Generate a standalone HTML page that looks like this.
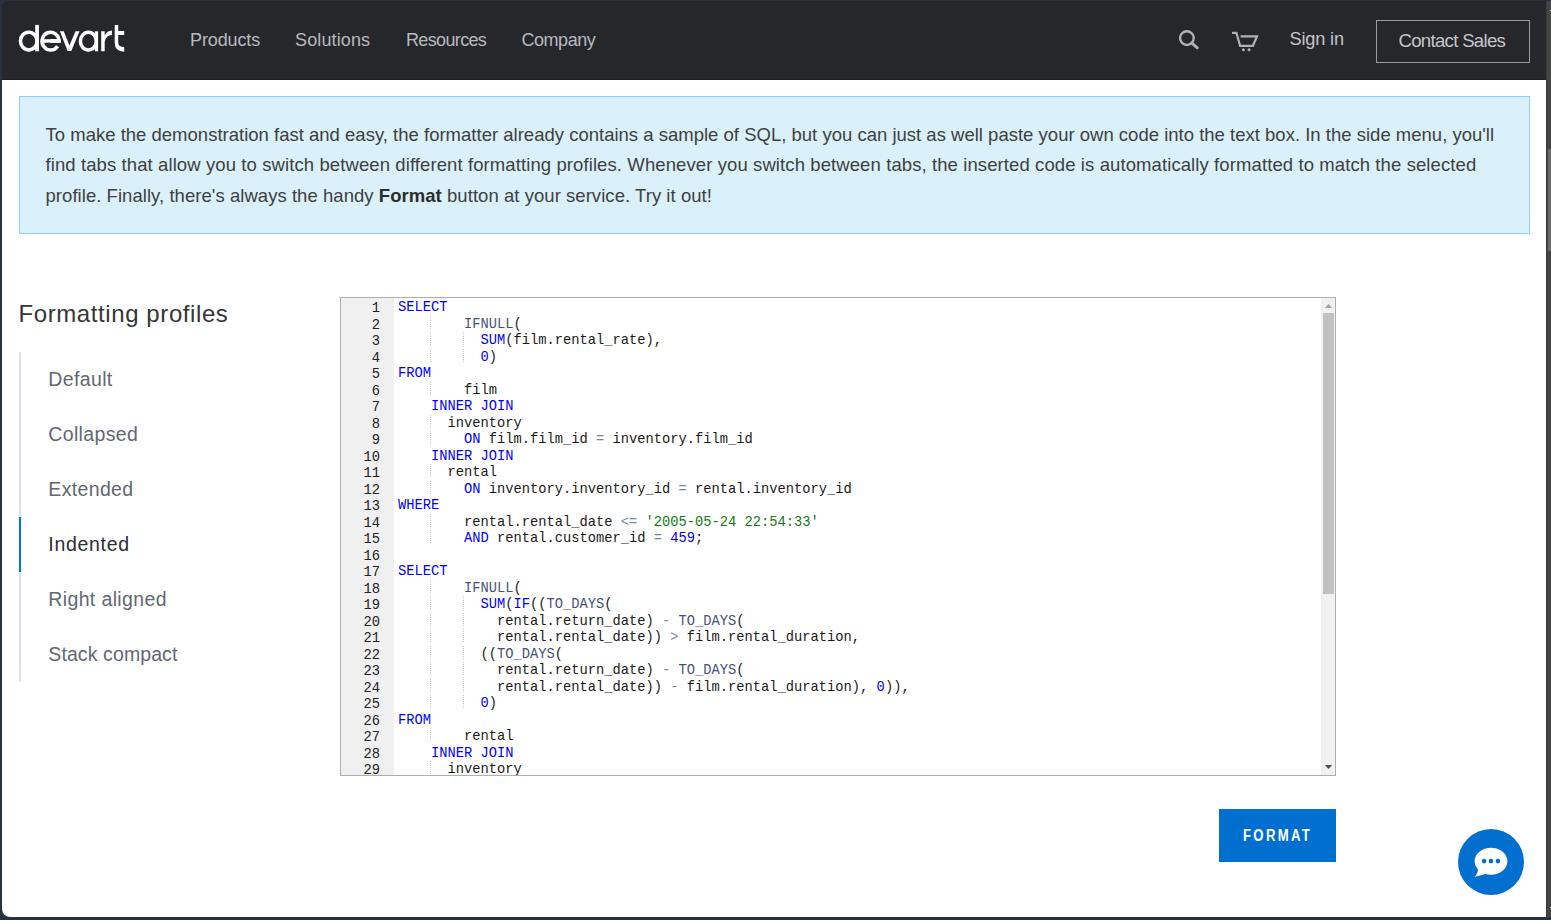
<!DOCTYPE html>
<html><head><meta charset="utf-8">
<style>
html,body{margin:0;padding:0;}
body{width:1551px;height:920px;overflow:hidden;background:#27313f;position:relative;font-family:"Liberation Sans",sans-serif;}
.win{position:absolute;left:0;top:0;width:1546px;height:917px;background:linear-gradient(#26272b 0,#26272b 80px,#fff 80px);clip-path:inset(1px 0 0 2px round 6px 0 0 8px);}
.a{position:absolute;white-space:pre;}
.nav{position:absolute;left:0;top:0;width:1546px;height:80px;background:#26272b;}
.navline{position:absolute;left:0;top:79px;width:1546px;height:1px;background:#1f2023;}
.ni{position:absolute;font-size:17.4px;line-height:20px;color:#b7babf;white-space:pre;}
.logo{position:absolute;left:0;top:0;}
.cs{position:absolute;left:1376px;top:20px;width:152px;height:41px;border:1px solid #9c9c9c;}
.sb{position:absolute;left:1546px;top:1px;width:5px;height:916px;background:#444;}
.sbl{position:absolute;left:1546px;top:1px;width:1px;height:916px;background:#383838;}
.sbt{position:absolute;left:1548px;top:149px;width:3px;height:102px;background:#6a6a6a;}
.info{position:absolute;left:19px;top:96px;width:1509px;height:136px;background:#daf1fb;border:1px solid #8ccefb;}
.it{position:absolute;left:46px;font-size:18.3px;line-height:20px;color:#3a3a3a;white-space:pre;}
.h2{position:absolute;left:19px;top:300px;font-size:25px;line-height:30px;color:#333;white-space:pre;}
.menuline{position:absolute;left:19px;top:352px;width:2px;height:330px;background:#dce0ea;}
.menuact{position:absolute;left:19px;top:517px;width:2px;height:55px;background:#0071e6;}
.mi{position:absolute;left:47px;font-size:19.8px;line-height:24px;color:#5d6470;white-space:pre;}
.ed{position:absolute;left:340px;top:297px;width:994px;height:477px;border:1px solid #abaeb3;background:#fff;overflow:hidden;}
.gut{position:absolute;left:341px;top:298px;width:53px;height:477px;background:#f0f0f0;}
.ln{position:absolute;left:341px;width:39px;text-align:right;font-family:"Liberation Mono",monospace;font-size:13.75px;line-height:16.5px;color:#222;}
.cl{position:absolute;left:398px;font-family:"Liberation Mono",monospace;font-size:13.75px;line-height:16.5px;color:#1a1a1a;white-space:pre;}
.k{color:#0000ff} .f{color:#46527a} .n{color:#0000ee} .s{color:#137a13} .o{color:#7a8594}
.g{position:absolute;width:1px;height:14px;background-image:linear-gradient(#c8c8c8 50%, transparent 50%);background-size:1px 2px;}
.vtrack{position:absolute;left:1321px;top:298px;width:14px;height:477px;background:#f1f1f1;}
.vthumb{position:absolute;left:1323px;top:313px;width:11px;height:281px;background:#c1c1c1;}
.fbtn{position:absolute;left:1219px;top:809px;width:117px;height:53px;background:#006fd0;}
.ft{position:absolute;left:1243px;top:820px;font-size:16px;line-height:24px;font-weight:bold;color:#fff;letter-spacing:2.3px;white-space:pre;}
.chat{position:absolute;left:1458px;top:828.5px;width:66px;height:66px;border-radius:50%;background:#006fd0;}
</style></head><body>
<div class="win">
<div class="nav"></div><div class="navline"></div>
<svg class="logo" width="140" height="80" viewBox="0 0 140 80">
<g fill="none" stroke="#fff" stroke-width="3.5">
<ellipse cx="28.75" cy="41.05" rx="8.3" ry="8.85"/>
<path d="M50.55 40.95 H59.1 A8.55 8.9 0 1 0 57.6 46.2" />
<ellipse cx="88.35" cy="41.15" rx="7.95" ry="8.8"/>
</g>
<g fill="#fff">
<rect x="35.2" y="24.9" width="3.7" height="26.4"/>
<rect x="42" y="39.2" width="18.6" height="3.5"/>
<polygon points="59.9,31.2 67.6,50.9 71.3,50.9 79.5,31.2 75.5,31.2 69.45,45.6 63.8,31.2"/>
<rect x="94.9" y="31.3" width="3.2" height="20"/>
<path d="M101.2 51.3 V31.35 H104.7 V35.5 Q107 30.8 111.9 30.6 V34.9 Q106 35.2 104.7 41.5 V51.3 Z"/>
<path d="M114.7 24.9 H118.2 V31 H124.2 V34.9 H118.2 V42.5 Q118.4 47.1 124.2 47.1 V51.7 Q114.7 51.7 114.7 42.5 Z"/>
</g></svg>
<div class="a" style="left:190.00px;top:28.76px;font-size:18.00px;line-height:23px;color:#b7babf;letter-spacing:-0.114px;">Products</div><div class="a" style="left:295.00px;top:28.76px;font-size:18.00px;line-height:23px;color:#b7babf;letter-spacing:0.125px;">Solutions</div><div class="a" style="left:406.00px;top:28.76px;font-size:18.00px;line-height:23px;color:#b7babf;letter-spacing:-0.650px;">Resources</div><div class="a" style="left:521.50px;top:28.76px;font-size:18.00px;line-height:23px;color:#b7babf;letter-spacing:-0.467px;">Company</div><div class="a" style="left:1289.50px;top:26.69px;font-size:18.20px;line-height:24px;color:#c3c5c9;letter-spacing:-0.180px;">Sign in</div><div class="a" style="left:1398.50px;top:28.55px;font-size:18.60px;line-height:24px;color:#c3c5c9;letter-spacing:-0.700px;">Contact Sales</div>
<svg class="a" style="left:0;top:0" width="1546" height="80">
<g fill="none" stroke="#b1b1b1">
<circle cx="1186.9" cy="38.1" r="6.85" stroke-width="2.4"/>
<line x1="1191.6" y1="42.9" x2="1197.3" y2="47.9" stroke-width="2.8" stroke-linecap="round"/>
<polyline points="1232,32.8 1236.4,32.8 1240.1,45.9 1252.9,45.9 1257,36.3 1240.6,36.3" stroke-width="2.2" stroke-linejoin="miter"/>
</g>
<g fill="#b1b1b1"><circle cx="1243.4" cy="49.8" r="1.5"/><circle cx="1249" cy="49.8" r="1.5"/></g>
</svg>
<div class="cs"></div>

<div class="info"></div>
<div class="a" style="left:45.50px;top:123.39px;font-size:18.50px;line-height:24px;color:#404040;letter-spacing:0.009px;">To make the demonstration fast and easy, the formatter already contains a sample of SQL, but you can just as well paste your own code into the text box. In the side menu, you'll</div><div class="a" style="left:45.50px;top:152.79px;font-size:18.50px;line-height:24px;color:#404040;letter-spacing:0.099px;">find tabs that allow you to switch between different formatting profiles. Whenever you switch between tabs, the inserted code is automatically formatted to match the selected</div><div class="a" style="left:45.50px;top:183.79px;font-size:18.50px;line-height:24px;color:#404040;letter-spacing:0.049px;">profile. Finally, there's always the handy <b style="color:#2e2e2e">Format</b> button at your service. Try it out!</div>

<div class="a" style="left:18.50px;top:298.28px;font-size:24.00px;line-height:31px;color:#363636;letter-spacing:0.590px;">Formatting profiles</div><div class="a" style="left:48.30px;top:367.24px;font-size:19.50px;line-height:25px;color:#616874;letter-spacing:0.367px;">Default</div><div class="a" style="left:48.30px;top:422.24px;font-size:19.50px;line-height:25px;color:#616874;letter-spacing:0.350px;">Collapsed</div><div class="a" style="left:48.30px;top:477.24px;font-size:19.50px;line-height:25px;color:#616874;letter-spacing:0.350px;">Extended</div><div class="a" style="left:48.30px;top:532.24px;font-size:19.50px;line-height:25px;color:#2b2f36;letter-spacing:0.686px;">Indented</div><div class="a" style="left:48.30px;top:587.24px;font-size:19.50px;line-height:25px;color:#616874;letter-spacing:0.367px;">Right aligned</div><div class="a" style="left:48.30px;top:642.24px;font-size:19.50px;line-height:25px;color:#616874;letter-spacing:0.100px;">Stack compact</div>
<div class="menuline"></div><div class="menuact"></div>

<div class="ed"></div>
<div class="gut"></div>
<div style="position:absolute;left:341px;top:298px;width:994px;height:477px;overflow:hidden;">
<div style="position:absolute;left:-341px;top:-298px;width:1551px;height:920px;">
<div class="ln" style="top:301.20px">1</div><div class="cl" style="top:300.20px"><span class="k">SELECT</span></div><div class="ln" style="top:317.70px">2</div><div class="cl" style="top:316.70px">        <span class="f">IFNULL</span>(</div><div class="ln" style="top:334.20px">3</div><div class="cl" style="top:333.20px">          <span class="k">SUM</span>(film.rental_rate),</div><div class="ln" style="top:350.70px">4</div><div class="cl" style="top:349.70px">          <span class="n">0</span>)</div><div class="ln" style="top:367.20px">5</div><div class="cl" style="top:366.20px"><span class="k">FROM</span></div><div class="ln" style="top:383.70px">6</div><div class="cl" style="top:382.70px">        film</div><div class="ln" style="top:400.20px">7</div><div class="cl" style="top:399.20px">    <span class="k">INNER</span> <span class="k">JOIN</span></div><div class="ln" style="top:416.70px">8</div><div class="cl" style="top:415.70px">      inventory</div><div class="ln" style="top:433.20px">9</div><div class="cl" style="top:432.20px">        <span class="k">ON</span> film.film_id <span class="o">=</span> inventory.film_id</div><div class="ln" style="top:449.70px">10</div><div class="cl" style="top:448.70px">    <span class="k">INNER</span> <span class="k">JOIN</span></div><div class="ln" style="top:466.20px">11</div><div class="cl" style="top:465.20px">      rental</div><div class="ln" style="top:482.70px">12</div><div class="cl" style="top:481.70px">        <span class="k">ON</span> inventory.inventory_id <span class="o">=</span> rental.inventory_id</div><div class="ln" style="top:499.20px">13</div><div class="cl" style="top:498.20px"><span class="k">WHERE</span></div><div class="ln" style="top:515.70px">14</div><div class="cl" style="top:514.70px">        rental.rental_date <span class="o">&lt;=</span> <span class="s">'2005-05-24 22:54:33'</span></div><div class="ln" style="top:532.20px">15</div><div class="cl" style="top:531.20px">        <span class="k">AND</span> rental.customer_id <span class="o">=</span> <span class="n">459</span>;</div><div class="ln" style="top:548.70px">16</div><div class="cl" style="top:547.70px"></div><div class="ln" style="top:565.20px">17</div><div class="cl" style="top:564.20px"><span class="k">SELECT</span></div><div class="ln" style="top:581.70px">18</div><div class="cl" style="top:580.70px">        <span class="f">IFNULL</span>(</div><div class="ln" style="top:598.20px">19</div><div class="cl" style="top:597.20px">          <span class="k">SUM</span>(<span class="k">IF</span>((<span class="f">TO_DAYS</span>(</div><div class="ln" style="top:614.70px">20</div><div class="cl" style="top:613.70px">            rental.return_date) <span class="o">-</span> <span class="f">TO_DAYS</span>(</div><div class="ln" style="top:631.20px">21</div><div class="cl" style="top:630.20px">            rental.rental_date)) <span class="o">&gt;</span> film.rental_duration,</div><div class="ln" style="top:647.70px">22</div><div class="cl" style="top:646.70px">          ((<span class="f">TO_DAYS</span>(</div><div class="ln" style="top:664.20px">23</div><div class="cl" style="top:663.20px">            rental.return_date) <span class="o">-</span> <span class="f">TO_DAYS</span>(</div><div class="ln" style="top:680.70px">24</div><div class="cl" style="top:679.70px">            rental.rental_date)) <span class="o">-</span> film.rental_duration), <span class="n">0</span>)),</div><div class="ln" style="top:697.20px">25</div><div class="cl" style="top:696.20px">          <span class="n">0</span>)</div><div class="ln" style="top:713.70px">26</div><div class="cl" style="top:712.70px"><span class="k">FROM</span></div><div class="ln" style="top:730.20px">27</div><div class="cl" style="top:729.20px">        rental</div><div class="ln" style="top:746.70px">28</div><div class="cl" style="top:745.70px">    <span class="k">INNER</span> <span class="k">JOIN</span></div><div class="ln" style="top:763.20px">29</div><div class="cl" style="top:762.20px">      inventory</div>
<div class="g" style="left:430px;top:316px"></div><div class="g" style="left:430px;top:332px"></div><div class="g" style="left:463px;top:332px"></div><div class="g" style="left:430px;top:349px"></div><div class="g" style="left:463px;top:349px"></div><div class="g" style="left:430px;top:382px"></div><div class="g" style="left:430px;top:415px"></div><div class="g" style="left:430px;top:431px"></div><div class="g" style="left:430px;top:464px"></div><div class="g" style="left:430px;top:481px"></div><div class="g" style="left:430px;top:514px"></div><div class="g" style="left:430px;top:530px"></div><div class="g" style="left:430px;top:580px"></div><div class="g" style="left:430px;top:596px"></div><div class="g" style="left:463px;top:596px"></div><div class="g" style="left:430px;top:613px"></div><div class="g" style="left:463px;top:613px"></div><div class="g" style="left:430px;top:629px"></div><div class="g" style="left:463px;top:629px"></div><div class="g" style="left:430px;top:646px"></div><div class="g" style="left:463px;top:646px"></div><div class="g" style="left:430px;top:662px"></div><div class="g" style="left:463px;top:662px"></div><div class="g" style="left:430px;top:679px"></div><div class="g" style="left:463px;top:679px"></div><div class="g" style="left:430px;top:695px"></div><div class="g" style="left:463px;top:695px"></div><div class="g" style="left:430px;top:728px"></div><div class="g" style="left:430px;top:761px"></div>
</div></div>
<div class="vtrack"></div><div class="vthumb"></div>
<svg class="a" style="left:1321px;top:298px" width="14" height="477">
<polygon points="3.8,10 11.2,10 7.5,6" fill="#a3a3a3"/>
<polygon points="3.8,467 11.2,467 7.5,471" fill="#505050"/>
</svg>

<div class="fbtn"></div>
<div class="a" style="left:1243px;top:824px;font-size:16px;line-height:24px;font-weight:bold;color:#fff;letter-spacing:2.85px;transform:scaleX(0.82);transform-origin:0 0">FORMAT</div>
<div class="chat"></div>
<svg class="a" style="left:1455px;top:825px" width="72" height="72" viewBox="1455 825 72 72">
<ellipse cx="1491" cy="861.2" rx="16.4" ry="13.5" fill="#fff"/>
<path d="M1478 866 Q1479 872 1474.6 877 Q1481 875 1487 873.5 Z" fill="#fff"/>
<g fill="#006fd0"><circle cx="1484.1" cy="861.1" r="2.3"/><circle cx="1491" cy="861.1" r="2.3"/><circle cx="1497.9" cy="861.1" r="2.3"/></g>
</svg>
</div>
<div class="sb"></div><div class="sbl"></div><div class="sbt"></div>
<div class="a" style="left:1550px;top:10px;width:1px;height:1px;background:#eee"></div>
<div class="a" style="left:1550px;top:907px;width:1px;height:1px;background:#eee"></div>
</body></html>
